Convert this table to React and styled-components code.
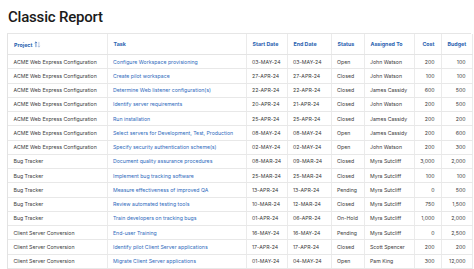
import styled, { createGlobalStyle } from "styled-components";

const GlobalStyle = createGlobalStyle`
  html, body { margin: 0; padding: 0; background: #fff; }
  body { font-family: Inter, "Liberation Sans", Arial, sans-serif; color: #404040; }
`;

const columns = [
  { key: "project", label: "Project", width: 99, sort: true },
  { key: "task", label: "Task", width: 139 },
  { key: "start", label: "Start Date", width: 41 },
  { key: "end", label: "End Date", width: 44 },
  { key: "status", label: "Status", width: 33 },
  { key: "assigned", label: "Assigned To", width: 50 },
  { key: "cost", label: "Cost", width: 27, num: true },
  { key: "budget", label: "Budget", width: 31, num: true },
];

const ACME = "ACME Web Express Configuration";
const BUG = "Bug Tracker";
const CSC = "Client Server Conversion";

const rows = [
  [ACME, "Configure Workspace provisioning", "03-MAY-24", "03-MAY-24", "Open", "John Watson", "200", "100"],
  [ACME, "Create pilot workspace", "27-APR-24", "27-APR-24", "Closed", "John Watson", "100", "100"],
  [ACME, "Determine Web listener configuration(s)", "22-APR-24", "22-APR-24", "Closed", "James Cassidy", "600", "500"],
  [ACME, "Identify server requirements", "20-APR-24", "21-APR-24", "Closed", "John Watson", "200", "500"],
  [ACME, "Run installation", "25-APR-24", "25-APR-24", "Closed", "James Cassidy", "200", "200"],
  [ACME, "Select servers for Development, Test, Production", "08-MAY-24", "08-MAY-24", "Open", "James Cassidy", "200", "600"],
  [ACME, "Specify security authentication scheme(s)", "02-MAY-24", "02-MAY-24", "Open", "John Watson", "200", "300"],
  [BUG, "Document quality assurance procedures", "08-MAR-24", "09-MAR-24", "Closed", "Myra Sutcliff", "3,000", "2,000"],
  [BUG, "Implement bug tracking software", "25-MAR-24", "25-MAR-24", "Closed", "Myra Sutcliff", "100", "100"],
  [BUG, "Measure effectiveness of improved QA", "13-APR-24", "13-APR-24", "Pending", "Myra Sutcliff", "0", "500"],
  [BUG, "Review automated testing tools", "10-MAR-24", "12-MAR-24", "Closed", "Myra Sutcliff", "750", "1,500"],
  [BUG, "Train developers on tracking bugs", "01-APR-24", "06-APR-24", "On-Hold", "Myra Sutcliff", "1,000", "2,000"],
  [CSC, "End-user Training", "16-MAY-24", "16-MAY-24", "Pending", "Myra Sutcliff", "0", "2,500"],
  [CSC, "Identify pilot Client Server applications", "17-APR-24", "17-APR-24", "Closed", "Scott Spencer", "200", "200"],
  [CSC, "Migrate Client Server applications", "01-MAY-24", "04-MAY-24", "Open", "Pam King", "300", "12,000"],
];

function SortIcon() {
  return (
    <Sort viewBox="0 0 8 8" width="7" height="7">
      <path d="M2.2 7V1M0.8 2.4L2.2 1l1.4 1.4" stroke="#2a62b0" strokeWidth="0.8" fill="none" />
      <path d="M5.6 1v6M4.2 5.6L5.6 7 7 5.6" stroke="#9db5d8" strokeWidth="0.8" fill="none" />
    </Sort>
  );
}

export default function App() {
  return (
    <Page>
      <GlobalStyle />
      <Title>Classic Report</Title>
      <Region>
        <Table>
          <colgroup>
            {columns.map((c) => (
              <col key={c.key} style={{ width: c.width }} />
            ))}
          </colgroup>
          <thead>
            <tr>
              {columns.map((c) => (
                <Th key={c.key} $num={c.num}>
                  {c.label}
                  {c.sort && <SortIcon />}
                </Th>
              ))}
            </tr>
          </thead>
          <tbody>
            {rows.map((r, i) => (
              <tr key={i}>
                {r.map((v, j) => (
                  <Td key={j} $num={columns[j].num}>
                    {j === 1 ? <TaskLink href="#">{v}</TaskLink> : v}
                  </Td>
                ))}
              </tr>
            ))}
          </tbody>
        </Table>
      </Region>
    </Page>
  );
}

const Page = styled.div`
  width: 474px;
  height: 269px;
  overflow: hidden;
  padding: 0 3px 0 7px;
  box-sizing: border-box;
`;

const Title = styled.h1`
  margin: 0;
  padding: 8px 0 0 1px;
  height: 26px;
  box-sizing: border-box;
  font-family: Roboto, "Liberation Sans", Arial, sans-serif;
  font-size: 15px;
  font-weight: 500;
  letter-spacing: -0.2px;
  color: #1a1a1a;
  line-height: 19px;
`;

const Region = styled.div`
  margin-top: 7px;
  border-left: 1px solid #e3e3e3;
  border-top: 1px solid #e6e6e6;
`;

const Table = styled.table`
  width: 464px;
  table-layout: fixed;
  border-collapse: collapse;
`;

const Th = styled.th`
  height: 20px;
  padding: 0 ${(p) => (p.$num ? "6px" : "4px")} 0 6px;
  font-size: 5.3px;
  font-weight: 700;
  color: #2a62b0;
  text-align: ${(p) => (p.$num ? "right" : "left")};
  border-right: 1px solid #ebebeb;
  border-bottom: 1px solid #e4e4e4;
  white-space: nowrap;
`;

const Sort = styled.svg`
  margin-left: 2px;
  vertical-align: -1px;
`;

const Td = styled.td`
  height: 13.25px;
  padding: 0 6px 0 5.5px;
  font-size: 5.2px;
  color: #3c3c3c;
  text-align: ${(p) => (p.$num ? "right" : "left")};
  border-right: 1px solid #ebebeb;
  border-bottom: 1px solid #e8e8e8;
  white-space: nowrap;
  overflow: hidden;
`;

const TaskLink = styled.a`
  color: #2f6bbd;
  text-decoration: none;
`;
